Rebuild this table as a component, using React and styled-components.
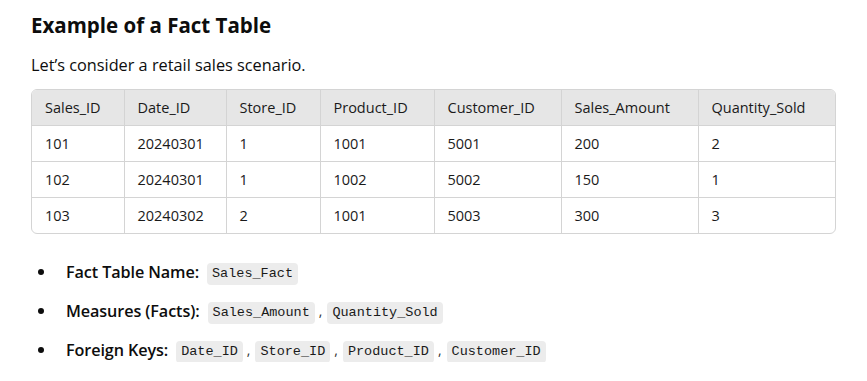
import styled, { createGlobalStyle } from "styled-components"

const GlobalStyle = createGlobalStyle`
  body {
    margin: 0;
    background: #ffffff;
    font-family: "Open Sans", "Noto Sans", sans-serif;
    color: #0d0d0d;
  }
`

const Page = styled.div`
  padding: 10px 31px 0 31px;
  width: 805px;
`

const Heading = styled.h3`
  margin: 0;
  font-size: 20.5px;
  font-weight: 700;
  line-height: 30px;
`

const Para = styled.p`
  margin: 12px 0 0 0;
  font-size: 16.3px;
  line-height: 26px;
`

const TableWrap = styled.div`
  margin-top: 11px;
  border: 1px solid #d4d4d4;
  border-radius: 6px;
  overflow: hidden;
`

const Table = styled.table`
  width: 100%;
  border-collapse: collapse;
  table-layout: fixed;
  font-size: 14.5px;
`

const Th = styled.th`
  background: #e6e6e6;
  font-weight: 500;
  text-align: left;
  height: 35px;
  padding: 0 13px;
  color: #1a1a1a;
  border-left: 1px solid #d4d4d4;
  border-bottom: 1px solid #d4d4d4;
  &:first-child { border-left: none; }
`

const Td = styled.td`
  height: 35px;
  padding: 0 13px;
  color: #1a1a1a;
  border-left: 1px solid #d4d4d4;
  border-top: 1px solid #d4d4d4;
  &:first-child { border-left: none; }
`

const List = styled.div`
  margin-top: 26px;
  display: flex;
  flex-direction: column;
  gap: 15px;
  padding-left: 7px;
`

const Item = styled.div`
  display: flex;
  align-items: center;
  height: 24px;
  font-size: 16.2px;
`

const Dot = styled.span`
  width: 6px;
  height: 6px;
  border-radius: 50%;
  background: #0d0d0d;
  margin-right: 22px;
  flex-shrink: 0;
`

const Label = styled.span`
  font-weight: 600;
  margin-right: 8px;
  letter-spacing: -0.1px;
`

const Code = styled.code`
  display: inline-block;
  font-family: "Liberation Mono", "DejaVu Sans Mono", monospace;
  font-size: 13.5px;
  line-height: 22px;
  background: #ececec;
  border-radius: 4px;
  padding: 0 5px;
  color: #1a1a1a;
`

const Sep = styled.span`
  font-size: 14px;
  margin: 0 5px 0 4px;
  color: #333;
`

const columns = [
  ["Sales_ID", 92],
  ["Date_ID", 102],
  ["Store_ID", 94],
  ["Product_ID", 114],
  ["Customer_ID", 127],
  ["Sales_Amount", 137],
  ["Quantity_Sold", 138],
]

const rows = [
  ["101", "20240301", "1", "1001", "5001", "200", "2"],
  ["102", "20240301", "1", "1002", "5002", "150", "1"],
  ["103", "20240302", "2", "1001", "5003", "300", "3"],
]

const bullets = [
  ["Fact Table Name:", ["Sales_Fact"]],
  ["Measures (Facts):", ["Sales_Amount", "Quantity_Sold"]],
  ["Foreign Keys:", ["Date_ID", "Store_ID", "Product_ID", "Customer_ID"]],
]

export default function App() {
  return (
    <Page>
      <GlobalStyle />
      <Heading>Example of a Fact Table</Heading>
      <Para>Let’s consider a retail sales scenario.</Para>
      <TableWrap>
        <Table>
          <colgroup>
            {columns.map(([name, w]) => (
              <col key={name} style={{ width: w }} />
            ))}
          </colgroup>
          <thead>
            <tr>
              {columns.map(([name]) => (
                <Th key={name}>{name}</Th>
              ))}
            </tr>
          </thead>
          <tbody>
            {rows.map((r) => (
              <tr key={r[0]}>
                {r.map((c, i) => (
                  <Td key={i}>{c}</Td>
                ))}
              </tr>
            ))}
          </tbody>
        </Table>
      </TableWrap>
      <List>
        {bullets.map(([label, codes]) => (
          <Item key={label}>
            <Dot />
            <Label>{label}</Label>
            {codes.map((c, i) => (
              <span key={c}>
                <Code>{c}</Code>
                {i < codes.length - 1 && <Sep>,</Sep>}
              </span>
            ))}
          </Item>
        ))}
      </List>
    </Page>
  )
}
